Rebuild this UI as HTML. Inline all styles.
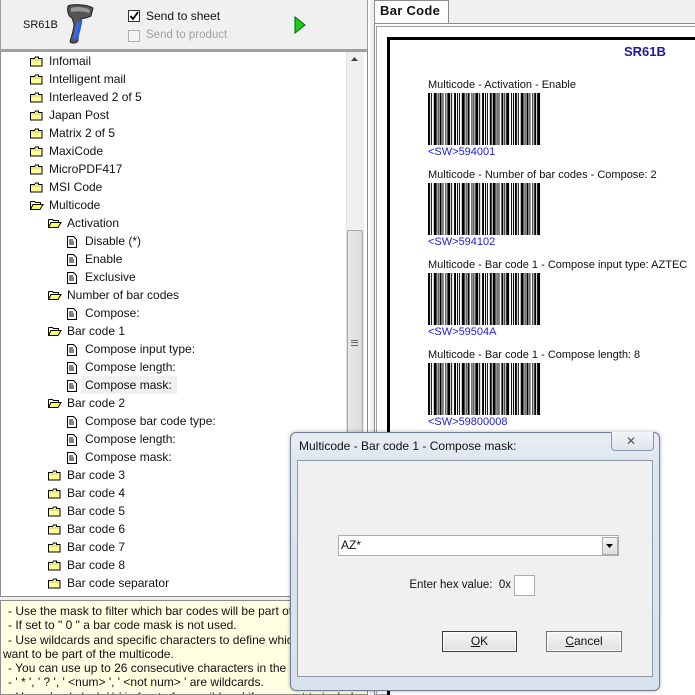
<!DOCTYPE html>
<html style="overflow:hidden"><head><meta charset="utf-8">
<style>
*{box-sizing:border-box;margin:0;padding:0}
html,body{width:695px;height:695px;overflow:hidden}
body{background:#f0f0f0;font-family:"Liberation Sans",sans-serif;font-size:12px;color:#111;position:relative}
.abs{position:absolute}
.tree .it{position:absolute;height:18px;line-height:18px;white-space:nowrap}
.tree svg{position:absolute;top:4px;left:-19px}
.desc div{height:14.3px;line-height:14.3px;white-space:nowrap}
.lbl{position:absolute;left:428px;font-size:11px;color:#111;white-space:nowrap}
.code{position:absolute;left:428px;font-size:11px;color:#2020e0}
.btn{position:absolute;height:21px;border:1px solid #707070;background:linear-gradient(#f6f6f6,#e0e0e0);text-align:center;line-height:19px;box-shadow:inset 0 0 0 1px #fcfcfc}
</style></head><body>
<svg width="0" height="0" style="position:absolute"><defs>
<g id="fc"><path d="M0.5 2.5h4l1-1.5h3v1.5h3.5v7.5h-11.5z" fill="#ffff99" stroke="#000"/><path d="M1.5 4h9" stroke="#c8c860"/></g>
<g id="fo"><path d="M0.5 1.5h4l1 1h5v2" fill="#ffff99" stroke="#000"/><path d="M0.5 1.5v8h9.5l3-5h-10l-2.5 5" fill="#ffff66" stroke="#000"/></g>
<g id="dc"><path d="M1.5 0.5h6l3 3v8h-9z" fill="#fff" stroke="#000"/><path d="M3 4h4M3 6h5M3 8h5" stroke="#000"/></g>
<g id="bc"><rect x="0" width="2" height="1"/><rect x="3" width="1" height="1"/><rect x="6" width="3" height="1"/><rect x="10" width="1" height="1"/><rect x="12" width="2" height="1"/><rect x="15" width="1" height="1"/><rect x="18" width="1" height="1"/><rect x="20" width="3" height="1"/><rect x="24" width="1" height="1"/><rect x="27" width="2" height="1"/><rect x="30" width="1" height="1"/><rect x="32" width="1" height="1"/><rect x="35" width="3" height="1"/><rect x="39" width="1" height="1"/><rect x="41" width="2" height="1"/><rect x="45" width="1" height="1"/><rect x="47" width="1" height="1"/><rect x="49" width="3" height="1"/><rect x="53" width="1" height="1"/><rect x="56" width="2" height="1"/><rect x="59" width="1" height="1"/><rect x="61" width="1" height="1"/><rect x="64" width="2" height="1"/><rect x="67" width="3" height="1"/><rect x="71" width="1" height="1"/><rect x="73" width="1" height="1"/><rect x="76" width="2" height="1"/><rect x="79" width="1" height="1"/><rect x="81" width="3" height="1"/><rect x="86" width="1" height="1"/><rect x="88" width="1" height="1"/><rect x="90" width="2" height="1"/><rect x="93" width="1" height="1"/><rect x="96" width="3" height="1"/><rect x="100" width="1" height="1"/><rect x="102" width="2" height="1"/><rect x="105" width="1" height="1"/><rect x="108" width="1" height="1"/><rect x="110" width="2" height="1"/><rect x="113" width="3" height="1"/></g>
</defs></svg>

<div class="abs" style="left:0;top:0;width:368px;height:50px;border:1px solid #a0a0a0;border-top:none;background:#f0f0f0"></div>
<div class="abs" style="left:23px;top:19px;font-size:11px">SR61B</div>
<svg class="abs" style="left:64px;top:2px" width="34" height="44" viewBox="0 0 34 44"><path d="M4 4c4-2 18-2 25 2l-2 8c-3 2-8 2-10 3l-1 5c0 6-2 10-2 16c0 3-6 4-8 2c1-5 4-12 4-18l-2-6c-4-2-5-7-4-12z" fill="#555" stroke="#222"/><path d="M7 6c5-2 14-1 19 2l-1 3c-5-2-12-2-18-1z" fill="#999"/><path d="M17 18c-1 6-3 14-5 20" stroke="#2a5de0" stroke-width="3" fill="none"/><path d="M14 20c-1 6-2 11-4 17" stroke="#3b6cf0" stroke-width="2" fill="none"/></svg>
<div class="abs" style="left:128px;top:10px;width:12px;height:12px;border:1px solid #333;background:#fff"></div>
<svg class="abs" style="left:129px;top:11px" width="10" height="10"><path d="M1.5 5l2.5 3l5-7" stroke="#000" stroke-width="1.8" fill="none"/></svg>
<div class="abs" style="left:146px;top:9px">Send to sheet</div>
<div class="abs" style="left:128px;top:30px;width:12px;height:12px;border:1px solid #b0b0b0;background:#f4f4f4"></div>
<div class="abs" style="left:146px;top:29px;color:#a0a0a0;font-size:11.5px">Send to product</div>
<svg class="abs" style="left:294px;top:16px" width="12" height="18"><path d="M1 1l10 8l-10 8z" fill="#18d018" stroke="#060"/></svg>

<div class="abs" style="left:0;top:50px;width:368px;height:547px;background:#fff;border:1px solid #8c8c8c;border-top:2px solid #a0a0a0"></div>
<div class="abs" style="left:346px;top:52px;width:18px;height:544px;background:#f0f0f0;border-left:1px solid #e0e0e0"></div>
<svg class="abs" style="left:351px;top:56px" width="8" height="6"><path d="M0 5h7l-3.5-4z" fill="#404040"/></svg>
<div class="abs" style="left:347px;top:230px;width:16px;height:366px;background:linear-gradient(90deg,#e8e8e8,#dcdcdc);border:1px solid #a8a8a8;border-radius:2px"></div>
<div class="abs" style="left:351px;top:340px;width:7px;height:6px;border-top:1px solid #666;border-bottom:1px solid #666"></div>
<div class="abs" style="left:351px;top:342px;width:7px;height:1px;background:#666"></div>
<div class="tree" style="position:absolute;left:0;top:1px">
<div class="it" style="left:49px;top:51px"><svg width="13" height="11"><use href="#fc"/></svg>Infomail</div>
<div class="it" style="left:49px;top:69px"><svg width="13" height="11"><use href="#fc"/></svg>Intelligent mail</div>
<div class="it" style="left:49px;top:87px"><svg width="13" height="11"><use href="#fc"/></svg>Interleaved 2 of 5</div>
<div class="it" style="left:49px;top:105px"><svg width="13" height="11"><use href="#fc"/></svg>Japan Post</div>
<div class="it" style="left:49px;top:123px"><svg width="13" height="11"><use href="#fc"/></svg>Matrix 2 of 5</div>
<div class="it" style="left:49px;top:141px"><svg width="13" height="11"><use href="#fc"/></svg>MaxiCode</div>
<div class="it" style="left:49px;top:159px"><svg width="13" height="11"><use href="#fc"/></svg>MicroPDF417</div>
<div class="it" style="left:49px;top:177px"><svg width="13" height="11"><use href="#fc"/></svg>MSI Code</div>
<div class="it" style="left:49px;top:195px"><svg width="14" height="11"><use href="#fo"/></svg>Multicode</div>
<div class="it" style="left:67px;top:213px"><svg width="14" height="11"><use href="#fo"/></svg>Activation</div>
<div class="it" style="left:85px;top:231px"><svg width="12" height="12"><use href="#dc"/></svg>Disable (*)</div>
<div class="it" style="left:85px;top:249px"><svg width="12" height="12"><use href="#dc"/></svg>Enable</div>
<div class="it" style="left:85px;top:267px"><svg width="12" height="12"><use href="#dc"/></svg>Exclusive</div>
<div class="it" style="left:67px;top:285px"><svg width="14" height="11"><use href="#fo"/></svg>Number of bar codes</div>
<div class="it" style="left:85px;top:303px"><svg width="12" height="12"><use href="#dc"/></svg>Compose:</div>
<div class="it" style="left:67px;top:321px"><svg width="14" height="11"><use href="#fo"/></svg>Bar code 1</div>
<div class="it" style="left:85px;top:339px"><svg width="12" height="12"><use href="#dc"/></svg>Compose input type:</div>
<div class="it" style="left:85px;top:357px"><svg width="12" height="12"><use href="#dc"/></svg>Compose length:</div>
<div class="it" style="left:81px;top:375px;background:#f0f0f0;padding:0 5px 0 4px"><svg width="12" height="12" style="left:-15px"><use href="#dc"/></svg>Compose mask:</div>
<div class="it" style="left:67px;top:393px"><svg width="14" height="11"><use href="#fo"/></svg>Bar code 2</div>
<div class="it" style="left:85px;top:411px"><svg width="12" height="12"><use href="#dc"/></svg>Compose bar code type:</div>
<div class="it" style="left:85px;top:429px"><svg width="12" height="12"><use href="#dc"/></svg>Compose length:</div>
<div class="it" style="left:85px;top:447px"><svg width="12" height="12"><use href="#dc"/></svg>Compose mask:</div>
<div class="it" style="left:67px;top:465px"><svg width="13" height="11"><use href="#fc"/></svg>Bar code 3</div>
<div class="it" style="left:67px;top:483px"><svg width="13" height="11"><use href="#fc"/></svg>Bar code 4</div>
<div class="it" style="left:67px;top:501px"><svg width="13" height="11"><use href="#fc"/></svg>Bar code 5</div>
<div class="it" style="left:67px;top:519px"><svg width="13" height="11"><use href="#fc"/></svg>Bar code 6</div>
<div class="it" style="left:67px;top:537px"><svg width="13" height="11"><use href="#fc"/></svg>Bar code 7</div>
<div class="it" style="left:67px;top:555px"><svg width="13" height="11"><use href="#fc"/></svg>Bar code 8</div>
<div class="it" style="left:67px;top:573px"><svg width="13" height="11"><use href="#fc"/></svg>Bar code separator</div>
</div>

<div class="abs desc" style="left:0;top:600px;width:368px;height:95px;background:#ffffe1;border:1px solid #8c8c8c;padding:3px 0 0 7px;overflow:hidden">
<div>- Use the mask to filter which bar codes will be part of the multicode.</div>
<div>- If set to " 0 " a bar code mask is not used.</div>
<div>- Use wildcards and specific characters to define which data you</div>
<div style="margin-left:-5px">want to be part of the multicode.</div>
<div>- You can use up to 26 consecutive characters in the mask.</div>
<div>- ' * ', ' ? ', ' &lt;num&gt; ', ' &lt;not num&gt; ' are wildcards.</div>
<div>- Use a backslash ' \ ' in front of any wildcard if you want to include</div>
</div>

<div class="abs" style="left:368px;top:0;width:2px;height:695px;background:#fff"></div>
<div class="abs" style="left:374px;top:0;width:75px;height:24px;border:1px solid #898c95;border-bottom:none;background:#fff"></div>
<div class="abs" style="left:380px;top:3px;font-size:13px;font-weight:bold;letter-spacing:0.3px">Bar Code</div>
<div class="abs" style="left:374px;top:23px;width:321px;height:672px;border:1px solid #898c95;border-right:none;background:#fcfcfc"></div>
<div class="abs" style="left:376px;top:26px;width:319px;height:669px;border:1px solid #a0a0a0;border-right:none;background:#fff"></div>
<div class="abs" style="left:387px;top:37px;width:308px;height:658px;border:3px solid #000;border-right:none;border-bottom:none;background:#fff"></div>
<div class="abs" style="left:624px;top:44px;font-size:13px;font-weight:bold;color:#1a1aa0">SR61B</div>

<div class="lbl" style="top:79px">Multicode - Activation - Enable</div>
<svg class="abs" style="left:428px;top:93px" width="113" height="52" viewBox="0 0 117 1" preserveAspectRatio="none"><use href="#bc"/></svg>
<div class="code" style="top:146px">&lt;SW&gt;594001</div>
<div class="lbl" style="top:169px">Multicode - Number of bar codes - Compose: 2</div>
<svg class="abs" style="left:428px;top:183px" width="113" height="52" viewBox="0 0 117 1" preserveAspectRatio="none"><use href="#bc"/></svg>
<div class="code" style="top:236px">&lt;SW&gt;594102</div>
<div class="lbl" style="top:259px">Multicode - Bar code 1 - Compose input type: AZTEC</div>
<svg class="abs" style="left:428px;top:273px" width="113" height="52" viewBox="0 0 117 1" preserveAspectRatio="none"><use href="#bc"/></svg>
<div class="code" style="top:326px">&lt;SW&gt;59504A</div>
<div class="lbl" style="top:349px">Multicode - Bar code 1 - Compose length: 8</div>
<svg class="abs" style="left:428px;top:363px" width="113" height="52" viewBox="0 0 117 1" preserveAspectRatio="none"><use href="#bc"/></svg>
<div class="code" style="top:416px">&lt;SW&gt;59800008</div>

<div class="abs" style="left:290px;top:432px;width:370px;height:259px;border:1px solid #6e7d92;border-radius:6px;background:linear-gradient(#e9eef4,#dde6ef 30px,#d8e2ec);box-shadow:0 0 4px rgba(0,0,0,.3)"></div>
<div class="abs" style="left:299px;top:439px;font-size:12px;color:#111">Multicode - Bar code 1 - Compose mask:</div>
<div class="abs" style="left:611px;top:432px;width:43px;height:19px;border:1px solid #8895a8;border-top:none;border-radius:0 0 4px 4px;background:linear-gradient(#f2f4f8,#dfe4ec)"></div>
<div class="abs" style="left:626px;top:434px;font-size:12px;color:#555">✕</div>
<div class="abs" style="left:297px;top:460px;width:356px;height:217px;background:#f0f0f0;border:1px solid #8e9aaa"></div>
<div class="abs" style="left:338px;top:535px;width:281px;height:21px;border:1px solid #abadb3;background:#fff"></div>
<div class="abs" style="left:341px;top:538px;font-size:12px">AZ*</div>
<div class="abs" style="left:602px;top:537px;width:16px;height:18px;background:linear-gradient(#f4f4f4,#dedede);border:1px solid #aaa"></div>
<svg class="abs" style="left:606px;top:544px" width="8" height="5"><path d="M0 0h7l-3.5 4z" fill="#000"/></svg>
<div class="abs" style="left:380px;width:131px;text-align:right;top:579px;font-size:11.5px;white-space:nowrap">Enter hex value:&nbsp; 0x</div>
<div class="abs" style="left:514px;top:575px;width:21px;height:21px;border:1px solid #abadb3;background:#fff"></div>
<div class="btn" style="left:442px;top:631px;width:75px;border-color:#3c3c3c"><u>O</u>K</div>
<div class="btn" style="left:546px;top:631px;width:76px"><u>C</u>ancel</div>
</body></html>
